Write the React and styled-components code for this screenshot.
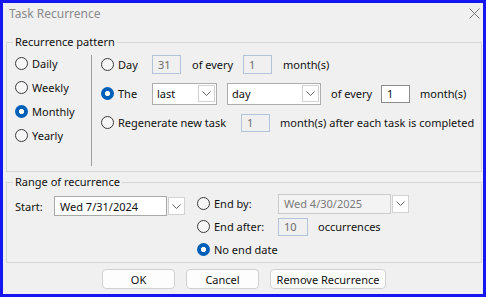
import React from "react";
import styled, { createGlobalStyle } from "styled-components";

const Global = createGlobalStyle`
  html, body {
    margin: 0;
    padding: 0;
    background: #f0f0f0;
  }
  body {
    font-family: "Noto Sans", "Open Sans", sans-serif;
    font-size: 11px;
    color: #111;
  }
`;

const Window = styled.div`
  width: 486px;
  height: 297px;
  box-sizing: border-box;
  border: 3px solid #1616f0;
  background: #f0f0f0;
  display: flex;
  flex-direction: column;
`;

const TitleBar = styled.div`
  height: 20px;
  padding: 0 3px 0 6px;
  display: flex;
  align-items: center;
  justify-content: space-between;
  color: #8a8a8a;
  font-size: 12px;
`;

const Body = styled.div`
  padding: 11px 1px 0 3px;
  display: flex;
  flex-direction: column;
`;

const Group = styled.fieldset`
  margin: 0 0 ${(p) => p.$gap || 0}px;
  padding: 0;
  border: 1px solid #d6d6d6;
  min-width: 0;
`;

const Legend = styled.legend`
  margin-left: 6px;
  padding: 0 2px;
  line-height: 16px;
  font-size: 11px;
  color: #111;
`;

const PatternBody = styled.div`
  display: flex;
  height: 121px;
`;

const Periods = styled.div`
  width: 76px;
  padding: 1px 0 0 8px;
  display: flex;
  flex-direction: column;
`;

const Divider = styled.div`
  width: 1px;
  margin: 5px 0;
  background: #a0a0a0;
`;

const Details = styled.div`
  padding-left: 9px;
  display: flex;
  flex-direction: column;
`;

const Row = styled.div`
  height: ${(p) => p.$h}px;
  display: flex;
  align-items: center;
  white-space: nowrap;
`;

const Option = styled.label`
  display: flex;
  align-items: center;
  gap: 4px;
  width: ${(p) => (p.$w ? `${p.$w}px` : "auto")};
  flex-shrink: 0;
`;

const RadioDot = styled.span`
  width: 13px;
  height: 13px;
  box-sizing: border-box;
  border-radius: 50%;
  flex-shrink: 0;
  border: ${(p) => (p.$on ? "none" : "1px solid #3a3a3a")};
  background: ${(p) =>
    p.$on
      ? "radial-gradient(circle, #fff 0 2.4px, #005fb8 2.9px)"
      : "#f6f6f6"};
`;

const Text = styled.span`
  margin-left: ${(p) => p.$ml || 0}px;
  width: ${(p) => (p.$w ? `${p.$w}px` : "auto")};
  flex-shrink: 0;
`;

const Field = styled.div`
  width: ${(p) => p.$w}px;
  height: ${(p) => p.$h || 18}px;
  box-sizing: border-box;
  flex-shrink: 0;
  margin-left: ${(p) => p.$ml || 0}px;
  padding-left: ${(p) => p.$pl || 5}px;
  display: flex;
  align-items: center;
  border: 1px solid ${(p) => (p.$off ? "#b3c4d8" : "#8c8c8c")};
  background: ${(p) => (p.$off ? "#f0f0f0" : "#fff")};
  color: ${(p) => (p.$off ? "#6d6d6d" : "#111")};
`;

const Combo = styled.div`
  width: ${(p) => p.$w}px;
  height: 22px;
  box-sizing: border-box;
  flex-shrink: 0;
  margin-left: ${(p) => p.$ml || 0}px;
  padding: 0 1px 0 4px;
  display: flex;
  align-items: center;
  justify-content: space-between;
  border: 1px solid #adadad;
  background: #fff;
`;

const DateBox = styled.div`
  width: 113px;
  height: 20px;
  box-sizing: border-box;
  flex-shrink: 0;
  padding-left: 5px;
  display: flex;
  align-items: center;
  border: 1px solid ${(p) => (p.$off ? "#cccccc" : "#a8a8a8")};
  background: ${(p) => (p.$off ? "#f3f3f3" : "#fff")};
  color: ${(p) => (p.$off ? "#7a7a7a" : "#111")};
`;

const DropButton = styled.span`
  width: 17px;
  height: ${(p) => p.$h || 17}px;
  box-sizing: border-box;
  flex-shrink: 0;
  margin-left: ${(p) => p.$ml || 0}px;
  display: flex;
  align-items: center;
  justify-content: center;
  border: 1px solid #d2d2d2;
  background: #fff;
`;

const RangeBody = styled.div`
  display: flex;
  padding: 2px 0 1px 8px;
  height: 69px;
`;

const StartSide = styled.div`
  display: flex;
  align-items: center;
  height: 26px;
  margin-top: 1px;
`;

const EndSide = styled.div`
  margin-left: 12px;
  display: flex;
  flex-direction: column;
`;

const Buttons = styled.div`
  margin-top: 6px;
  display: flex;
  justify-content: center;
  gap: 11px;
`;

const Button = styled.button`
  width: ${(p) => p.$w}px;
  height: 20px;
  padding: 0;
  border: 1px solid #d0d0d0;
  border-radius: 4px;
  background: #fdfdfd;
  font-family: inherit;
  font-size: 11px;
  color: #111;
`;

const Chevron = () => (
  <svg width="9" height="5" viewBox="0 0 9 5">
    <path d="M0.5 0.5 L4.5 4.5 L8.5 0.5" fill="none" stroke="#606060" strokeWidth="1" />
  </svg>
);

const CloseIcon = () => (
  <svg width="11" height="11" viewBox="0 0 11 11">
    <path d="M0.5 0.5 L10.5 10.5 M10.5 0.5 L0.5 10.5" stroke="#777" strokeWidth="1" />
  </svg>
);

const Radio = ({ on, w, children }) => (
  <Option $w={w}>
    <RadioDot $on={on} />
    {children}
  </Option>
);

const App = () => {
  return (
    <>
      <Global />
      <Window>
        <TitleBar>
          Task Recurrence
          <CloseIcon />
        </TitleBar>
        <Body>
          <Group $gap={2}>
            <Legend>Recurrence pattern</Legend>
            <PatternBody>
              <Periods>
                {["Daily", "Weekly", "Monthly", "Yearly"].map((p) => (
                  <Row $h={24} key={p}>
                    <Radio on={p === "Monthly"}>{p}</Radio>
                  </Row>
                ))}
              </Periods>
              <Divider />
              <Details>
                <Row $h={29}>
                  <Radio w={51}>Day</Radio>
                  <Field $w={29} $h={19} $off>31</Field>
                  <Text $ml={11} $w={51}>of every</Text>
                  <Field $w={29} $h={19} $off>1</Field>
                  <Text $ml={11}>month(s)</Text>
                </Row>
                <Row $h={29}>
                  <Radio on w={51}>The</Radio>
                  <Combo $w={65}>
                    last
                    <DropButton><Chevron /></DropButton>
                  </Combo>
                  <Combo $w={94} $ml={10}>
                    day
                    <DropButton><Chevron /></DropButton>
                  </Combo>
                  <Text $ml={10} $w={50}>of every</Text>
                  <Field $w={29}>1</Field>
                  <Text $ml={10}>month(s)</Text>
                </Row>
                <Row $h={29}>
                  <Radio w={140}>Regenerate new task</Radio>
                  <Field $w={29} $off>1</Field>
                  <Text $ml={10}>month(s) after each task is completed</Text>
                </Row>
              </Details>
            </PatternBody>
          </Group>

          <Group>
            <Legend>Range of recurrence</Legend>
            <RangeBody>
              <StartSide>
                <Text $w={39}>Start:</Text>
                <DateBox>Wed 7/31/2024</DateBox>
                <DropButton $ml={1} $h={18}><Chevron /></DropButton>
              </StartSide>
              <EndSide>
                <Row $h={23}>
                  <Radio w={81}>End by:</Radio>
                  <DateBox $off>Wed 4/30/2025</DateBox>
                  <DropButton $ml={1} $h={18}><Chevron /></DropButton>
                </Row>
                <Row $h={23}>
                  <Radio w={81}>End after:</Radio>
                  <Field $w={30} $off>10</Field>
                  <Text $ml={10}>occurrences</Text>
                </Row>
                <Row $h={23}>
                  <Radio on>No end date</Radio>
                </Row>
              </EndSide>
            </RangeBody>
          </Group>

          <Buttons>
            <Button $w={73}>OK</Button>
            <Button $w={73}>Cancel</Button>
            <Button $w={116}>Remove Recurrence</Button>
          </Buttons>
        </Body>
      </Window>
    </>
  );
};

export default App;
